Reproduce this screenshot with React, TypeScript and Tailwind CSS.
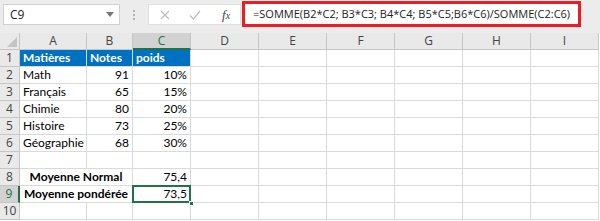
import React from "react";

const colW = ["w-[67px]", "w-[46px]", "w-[58px]", "w-[68px]", "w-[68px]", "w-[68px]", "w-[68px]", "w-[68px]", "w-[68px]"];
const letters = ["A", "B", "C", "D", "E", "F", "G", "H", "I"];

const cellFont = "font-['Lato','Liberation_Sans',sans-serif] text-[12px] text-black whitespace-nowrap";

function RowHead({ n, sel }: { n: number; sel?: boolean }) {
  return (
    <div
      className={
        "w-[20px] h-[17px] shrink-0 flex items-center justify-center border-b border-r text-[12px] font-['Open_Sans',sans-serif] " +
        (sel
          ? "bg-[#d2d2d2] border-b-[#c6c6c6] border-r-2 border-r-[#217346] text-[#217346]"
          : "bg-[#e9e9e9] border-[#c6c6c6] text-[#444]")
      }
    >
      {n}
    </div>
  );
}

function Cell({ w, children, className = "" }: { w: string; children?: React.ReactNode; className?: string }) {
  return (
    <div className={`${w} h-[17px] shrink-0 border-r border-b border-[#dadada] flex items-center px-[3px] ${cellFont} ${className}`}>
      {children}
    </div>
  );
}

function EmptyRest({ from }: { from: number }) {
  return (
    <>
      {colW.slice(from).map((w, i) => (
        <Cell key={i} w={w} />
      ))}
    </>
  );
}

export default function App() {
  const data: [string, string, string][] = [
    ["Math", "91", "10%"],
    ["Français", "65", "15%"],
    ["Chimie", "80", "20%"],
    ["Histoire", "73", "25%"],
    ["Géographie", "68", "30%"],
  ];
  return (
    <div className="w-[600px] h-[221px] bg-white overflow-hidden">
      {/* formula bar */}
      <div className="h-[33px] bg-[#ececec] flex items-start pt-[1px]">
        <div className="ml-[3px] mt-[3px] w-[117px] h-[21px] bg-white border border-[#d0d0d0] flex items-center justify-between pl-[6px] pr-[5px]">
          <span className="font-['Open_Sans',sans-serif] text-[12px] text-[#222]">C9</span>
          <svg width="8" height="5" viewBox="0 0 8 5"><path d="M0 0h8L4 5z" fill="#777" /></svg>
        </div>
        <div className="w-[28px] h-[21px] mt-[3px] flex flex-col items-center justify-center gap-[2px]">
          <div className="w-[2px] h-[2px] bg-[#b5b5b5]" />
          <div className="w-[2px] h-[2px] bg-[#b5b5b5]" />
          <div className="w-[2px] h-[2px] bg-[#b5b5b5]" />
        </div>
        <div className="mt-[3px] w-[93px] h-[21px] bg-white border border-[#e0e0e0] flex items-center">
          <svg className="ml-[11px]" width="10" height="10" viewBox="0 0 10 10"><path d="M1 1l8 8M9 1l-8 8" stroke="#bdbdbd" strokeWidth="1.2" /></svg>
          <svg className="ml-[19px]" width="12" height="10" viewBox="0 0 12 10"><path d="M1 5.5l3.5 3.5L11 1" stroke="#bdbdbd" strokeWidth="1.3" fill="none" /></svg>
          <span className="ml-[21px] font-['Liberation_Serif',serif] italic text-[13px] text-[#444] leading-none">
            f<span className="text-[10px]">x</span>
          </span>
        </div>
        <div className="ml-[1px] w-[339px] h-[26px] bg-white border-[3px] border-[#ec1c24] flex items-center pl-[8px]">
          <span className="font-['Open_Sans',sans-serif] text-[11px] text-[#222] whitespace-nowrap">
            =SOMME(B2*C2; B3*C3; B4*C4; B5*C5;B6*C6)/SOMME(C2:C6)
          </span>
        </div>
      </div>

      {/* column headers */}
      <div className="flex h-[17px]">
        <div className="w-[20px] h-[17px] bg-[#e9e9e9] border-r border-b border-[#c6c6c6] relative">
          <svg className="absolute right-[2px] bottom-[2px]" width="10" height="10" viewBox="0 0 10 10"><path d="M10 0v10H0z" fill="#c4c4c4" /></svg>
        </div>
        {letters.map((l, i) => (
          <div
            key={l}
            className={
              `${colW[i]} h-[17px] shrink-0 flex items-center justify-center border-r text-[12px] font-['Open_Sans',sans-serif] ` +
              (l === "C"
                ? "bg-[#d2d2d2] border-r-[#c6c6c6] border-b-2 border-b-[#217346] text-[#217346]"
                : "bg-[#e9e9e9] border-b border-[#c6c6c6] text-[#444]")
            }
          >
            {l}
          </div>
        ))}
      </div>

      {/* row 1 */}
      <div className="flex">
        <RowHead n={1} />
        <Cell w={colW[0]} className="bg-[#0070c0] border-[#0070c0] !text-white font-bold">Matières</Cell>
        <Cell w={colW[1]} className="bg-[#0070c0] border-[#0070c0] !text-white font-bold">Notes</Cell>
        <Cell w={colW[2]} className="bg-[#0070c0] border-[#0070c0] !text-white font-bold">poids</Cell>
        <EmptyRest from={3} />
      </div>

      {data.map((r, i) => (
        <div className="flex" key={i}>
          <RowHead n={i + 2} />
          <Cell w={colW[0]}>{r[0]}</Cell>
          <Cell w={colW[1]} className="justify-end">{r[1]}</Cell>
          <Cell w={colW[2]} className="justify-end">{r[2]}</Cell>
          <EmptyRest from={3} />
        </div>
      ))}

      <div className="flex">
        <RowHead n={7} />
        <EmptyRest from={0} />
      </div>

      <div className="flex">
        <RowHead n={8} />
        <Cell w="w-[113px]" className="justify-center font-bold">Moyenne Normal</Cell>
        <Cell w={colW[2]} className="justify-end">75,4</Cell>
        <EmptyRest from={3} />
      </div>

      <div className="flex">
        <RowHead n={9} sel />
        <Cell w="w-[113px]" className="justify-center font-bold">Moyenne pondérée</Cell>
        <div className="relative">
          <Cell w={colW[2]} className="justify-end">73,5</Cell>
          <div className="absolute left-[-1px] top-[-1px] w-[59px] h-[18px] border-2 border-[#217346]" />
          <div className="absolute right-[-3px] bottom-[-3px] w-[5px] h-[5px] bg-[#217346] border border-white" />
        </div>
        <EmptyRest from={3} />
      </div>

      <div className="flex">
        <RowHead n={10} />
        <EmptyRest from={0} />
      </div>
    </div>
  );
}
